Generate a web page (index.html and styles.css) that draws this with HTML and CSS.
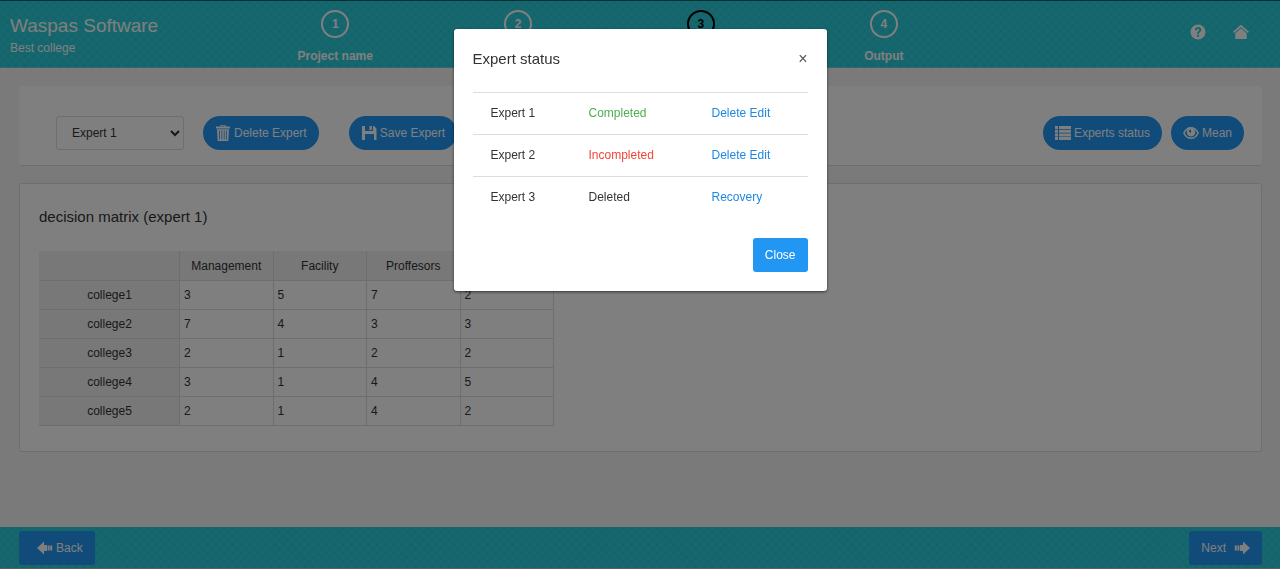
FILE: index.html
```html
<!DOCTYPE html>
<html lang="en">
<head>
    <meta charset="UTF-8">
    <meta name="viewport" content="width=device-width, initial-scale=1.0">
    <title>Waspas Software</title>
    <link rel="stylesheet" href="styles.css">
</head>
<body>
    <header class="header">
        <div class="brand">
            <h1>Waspas Software</h1>
            <p>Best college</p>
        </div>
        <ol class="steps">
            <li><span class="step-number">1</span>Project name</li>
            <li><span class="step-number">2</span></li>
            <li class="current"><span class="step-number">3</span></li>
            <li><span class="step-number">4</span>Output</li>
        </ol>
        <nav class="header-links">
            <a href="#" aria-label="Help">
                <svg viewBox="0 0 16 16" width="16" height="16"><path fill="currentColor" fill-rule="evenodd" d="M8 0.5a7.5 7.5 0 1 0 0 15a7.5 7.5 0 0 0 0-15zM5 6.2C5 4.2 6.200 3 8.100 3C10 3 11.300 4.100 11.300 5.800C11.300 7.900 9 8.100 9 9.800H7C7 7.300 9.100 7.200 9.100 5.900C9.100 5.200 8.700 4.800 8.100 4.800C7.400 4.800 7 5.300 7 6.200zM7 10.800h2v2H7z"/></svg>
            </a>
            <a href="#" aria-label="Home">
                <svg viewBox="0 0 16 16" width="16" height="16"><path fill="currentColor" d="M8 0.800L0 7.800l1.200 1.300L8 3.200l6.800 5.900L16 7.800zM8 4.200L2.300 9.200V15h11.400V9.200z"/></svg>
            </a>
        </nav>
    </header>

    <main class="content">
        <section class="card toolbar">
            <select class="expert-select" aria-label="Expert">
                <option>Expert 1</option>
                <option>Expert 2</option>
                <option>Expert 3</option>
            </select>
            <button type="button" class="btn btn-round">
                <svg viewBox="0 0 16 16" width="16" height="16"><path fill="currentColor" fill-rule="evenodd" d="M5.500 1.500V0h5v1.500H15v2H1v-2zM6.500 1.500h3V0.800h-3zM2 4.200h12L13.300 16H2.700zM4.200 5.500v9h0.800v-9zM6.500 5.500v9h0.800v-9zM8.800 5.500v9h0.800v-9zM11 5.500v9h0.800v-9z"/></svg>
                Delete Expert
            </button>
            <button type="button" class="btn btn-round btn-save">
                <svg viewBox="0 0 16 16" width="16" height="16"><path fill="currentColor" fill-rule="evenodd" d="M1 1h3v5h8V1h1l2.500 2.500V15H13V9H4v6H1zM8.500 1h2.300v4H8.500z"/></svg>
                Save Expert
            </button>
            <div class="toolbar-right">
                <button type="button" class="btn btn-round">
                    <svg viewBox="0 0 16 16" width="16" height="16"><path fill="currentColor" d="M0 1h3v3H0zM4 1h12v3H4zM0 4.700h3v3H0zM4 4.700h12v3H4zM0 8.400h3v3H0zM4 8.400h12v3H4zM0 12.100h3v3H0zM4 12.100h12v3H4z"/></svg>
                    Experts status
                </button>
                <button type="button" class="btn btn-round">
                    <svg viewBox="0 0 16 16" width="16" height="16"><path fill="none" stroke="currentColor" stroke-width="1.600" d="M0.900 8C2.500 4.600 5 2.700 8 2.700s5.500 1.900 7.100 5.300c-1.600 3.400-4.100 5.300-7.100 5.300S2.500 11.400 0.900 8z"/><path fill="currentColor" fill-rule="evenodd" d="M8 3a4.300 4.300 0 1 0 0 8.600A4.300 4.300 0 0 0 8 3zM8 4.600a2.200 2.200 0 0 0-2.200 2.200L8 8z"/></svg>
                    Mean
                </button>
            </div>
        </section>

        <section class="card matrix">
            <h2>decision matrix (expert 1)</h2>
            <table class="matrix-table">
                <thead>
                    <tr><th></th><th>Management</th><th>Facility</th><th>Proffesors</th><th></th></tr>
                </thead>
                <tbody>
                    <tr><th>college1</th><td>3</td><td>5</td><td>7</td><td>2</td></tr>
                    <tr><th>college2</th><td>7</td><td>4</td><td>3</td><td>3</td></tr>
                    <tr><th>college3</th><td>2</td><td>1</td><td>2</td><td>2</td></tr>
                    <tr><th>college4</th><td>3</td><td>1</td><td>4</td><td>5</td></tr>
                    <tr><th>college5</th><td>2</td><td>1</td><td>4</td><td>2</td></tr>
                </tbody>
            </table>
        </section>
    </main>

    <footer class="footer">
        <button type="button" class="btn btn-back">
            <svg viewBox="0 0 16 16" width="16" height="16"><path fill="currentColor" d="M0 8l7-6.500V5h3v6H7v3.500zM10.600 5.500h2v5h-2zM13.200 5.500h2v5h-2z"/></svg>
            Back
        </button>
        <button type="button" class="btn btn-next">
            Next
            <svg viewBox="0 0 16 16" width="16" height="16"><path fill="currentColor" d="M16 8L9 1.500V5H6v6h3v3.500zM3.400 5.500h2v5h-2zM0.800 5.500h2v5h-2z"/></svg>
        </button>
    </footer>

    <div class="overlay">
        <div class="modal" role="dialog" aria-labelledby="modalTitle">
            <div class="modal-header">
                <h2 id="modalTitle">Expert status</h2>
                <button type="button" class="modal-x" aria-label="Close dialog">×</button>
            </div>
            <table class="status-table">
                <tbody>
                    <tr>
                        <td>Expert 1</td>
                        <td class="completed">Completed</td>
                        <td><a href="#">Delete</a> <a href="#">Edit</a></td>
                    </tr>
                    <tr>
                        <td>Expert 2</td>
                        <td class="incompleted">Incompleted</td>
                        <td><a href="#">Delete</a> <a href="#">Edit</a></td>
                    </tr>
                    <tr>
                        <td>Expert 3</td>
                        <td>Deleted</td>
                        <td><a href="#">Recovery</a></td>
                    </tr>
                </tbody>
            </table>
            <div class="modal-footer">
                <button type="button" class="btn">Close</button>
            </div>
        </div>
    </div>
</body>
</html>
```
FILE: styles.css
```css
* {
    box-sizing: border-box;
}

body {
    font-family: "Liberation Sans", Arial, sans-serif;
    font-size: 12px;
    line-height: 18px;
    color: #333;
    background-color: #f5f5f5;
    margin: 0;
    min-height: 100vh;
    display: flex;
    flex-direction: column;
}

h1, h2, p {
    margin: 0;
    font-weight: normal;
}

a {
    color: #1e88e5;
    text-decoration: none;
}

svg {
    flex: none;
}

.header,
.footer {
    background-color: #2ccfdc;
    background-image:
        repeating-linear-gradient(45deg, rgba(0, 0, 0, 0.02) 0 2px, transparent 2px 6px),
        repeating-linear-gradient(-45deg, rgba(0, 0, 0, 0.02) 0 2px, transparent 2px 6px);
}

.header {
    display: grid;
    grid-template-columns: 4fr 12fr 5fr;
    height: 68px;
    border-top: 1px solid #06606e;
    border-bottom: 1px solid #5fd3dd;
    color: #fff;
}

.brand {
    padding: 12px 0 0 10px;
}

.brand h1 {
    font-size: 19px;
    line-height: 26px;
    white-space: nowrap;
}

.steps {
    display: grid;
    grid-template-columns: repeat(4, 1fr);
    margin: 0;
    padding: 9px 0 0;
    list-style: none;
    font-weight: bold;
}

.steps li {
    display: flex;
    flex-direction: column;
    align-items: center;
    gap: 9px;
}

.step-number {
    width: 28px;
    height: 28px;
    border: 2px solid currentColor;
    border-radius: 50%;
    line-height: 25px;
    text-align: center;
}

.steps .current {
    color: #000;
}

.header-links {
    display: flex;
    justify-content: flex-end;
    gap: 27px;
    padding: 23px 31px 0 0;
}

.header-links a {
    color: #fff;
}

.content {
    flex: 1;
    display: flex;
    flex-direction: column;
    gap: 17px;
    padding: 18px 18px 20px 19px;
}

.card {
    background-color: #fff;
    border: 1px solid #ddd;
    border-radius: 3px;
}

.toolbar {
    display: flex;
    align-items: center;
    height: 80px;
    padding: 14px 17px 0 36px;
    border-color: transparent transparent #ddd;
}

.expert-select {
    width: 128px;
    height: 34px;
    margin-right: 19px;
    padding: 0 0 0 11px;
    border: 1px solid #ddd;
    border-radius: 3px;
    background-color: #fff;
    color: #333;
    font: inherit;
}

.toolbar-right {
    display: flex;
    gap: 9px;
    margin-left: auto;
}

.btn {
    display: inline-flex;
    align-items: center;
    gap: 3px;
    height: 34px;
    padding: 0 12px;
    border: none;
    border-radius: 3px;
    background-color: #2196f3;
    color: #fff;
    font: inherit;
    white-space: nowrap;
    cursor: pointer;
}

.btn-round {
    border-radius: 17px;
}

.btn-save {
    margin-left: 30px;
}

.matrix {
    padding: 20px 19px 25px;
}

.matrix h2 {
    margin-bottom: 21px;
    font-size: 15px;
    line-height: 26px;
}

.matrix-table {
    width: 515px;
    table-layout: fixed;
    border-collapse: collapse;
}

.matrix-table th,
.matrix-table td {
    height: 29px;
    padding: 0 4px;
    border: 1px solid #ddd;
}

.matrix-table th {
    background-color: #f0f0f0;
    font-weight: normal;
}

.matrix-table thead th {
    border-top-color: #f0f0f0;
}

.matrix-table th:first-child {
    width: 140px;
    border-left-color: #f0f0f0;
}

.footer {
    display: flex;
    justify-content: space-between;
    align-items: center;
    height: 42px;
    padding: 0 18px 0 19px;
    border-bottom: 1px solid #bbb;
}

.btn-back {
    padding-left: 18px;
}

.btn-next {
    gap: 8px;
}

.overlay {
    position: fixed;
    inset: 0;
    padding-top: 29px;
    background-color: rgba(0, 0, 0, 0.5);
}

.modal {
    width: 373px;
    max-width: 100%;
    margin: 0 auto;
    padding: 18px 19px 19px;
    border-radius: 3px;
    background-color: #fff;
    box-shadow: 0 1px 3px rgba(0, 0, 0, 0.6);
}

.modal-header {
    display: flex;
    justify-content: space-between;
    align-items: center;
    margin-bottom: 21px;
}

.modal-header h2 {
    font-size: 15px;
    line-height: 24px;
}

.modal-x {
    padding: 0;
    border: none;
    background: none;
    color: #555;
    font: inherit;
    font-size: 16px;
    cursor: pointer;
}

.status-table {
    width: 100%;
    table-layout: fixed;
    border-collapse: collapse;
}

.status-table td {
    height: 42px;
    padding: 0 0 2px 18px;
    border-top: 1px solid #ddd;
}

.status-table td:nth-child(1) {
    width: 98px;
}

.status-table td:nth-child(2) {
    width: 123px;
}

.status-table .completed {
    color: #4caf50;
}

.status-table .incompleted {
    color: #f44336;
}

.modal-footer {
    display: flex;
    justify-content: flex-end;
    margin-top: 19px;
}
```
